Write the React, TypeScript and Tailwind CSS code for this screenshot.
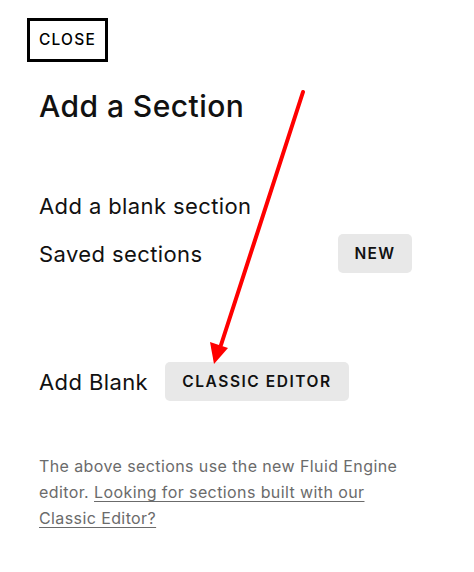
import React from "react";

export default function App() {
  return (
    <div className="relative w-[474px] h-[572px] bg-white overflow-hidden" style={{ fontFamily: "Inter, 'Noto Sans', sans-serif" }}>
      <div className="pl-[27px] pt-[18px]">
        <div className="w-[81px] h-[44px] border-[3px] border-black flex items-center justify-center text-[15.5px] font-medium tracking-[0.08em] text-black">
          CLOSE
        </div>
      </div>
      <div className="pl-[39px] pr-[62px]">
        <h1 className="mt-[24px] text-[30px] leading-[40px] font-medium tracking-[0.015em] text-[#111]">Add a Section</h1>
        <div className="mt-[66px] text-[22px] leading-[28px] tracking-[0.018em] text-[#111]">Add a blank section</div>
        <div className="mt-[14px] flex items-center justify-between">
          <span className="text-[22px] leading-[28px] tracking-[0.018em] text-[#111]">Saved sections</span>
          <span className="w-[74px] h-[39px] rounded-[5px] bg-[#e8e8e8] flex items-center justify-center text-[15.5px] font-semibold tracking-[0.09em] text-[#111]">NEW</span>
        </div>
        <div className="mt-[89px] flex items-center gap-[17px]">
          <span className="text-[22px] leading-[28px] tracking-[0.018em] text-[#111]">Add Blank</span>
          <span className="w-[184px] h-[39px] rounded-[5px] bg-[#e8e8e8] flex items-center justify-center text-[15.5px] font-semibold tracking-[0.1em] text-[#111]">CLASSIC EDITOR</span>
        </div>
        <p className="mt-[52px] text-[16px] leading-[26px] tracking-[0.025em] text-[#6b6b6b]">
          The above sections use the new Fluid Engine editor.{" "}
          <span className="underline underline-offset-[3px]">Looking for sections built with our Classic Editor?</span>
        </p>
      </div>
      <svg className="absolute left-0 top-0 pointer-events-none" width="474" height="572">
        <line x1="303" y1="92" x2="221" y2="345" stroke="#ff0000" strokeWidth="4" strokeLinecap="round" />
        <polygon points="214,364 210,342 228,348" fill="#ff0000" />
      </svg>
    </div>
  );
}
